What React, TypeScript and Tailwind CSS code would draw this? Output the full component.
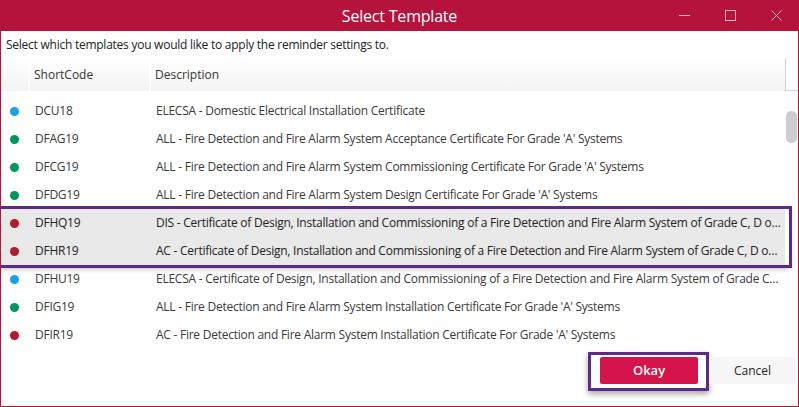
import React from "react";

const rows = [
  { code: "DCU18", desc: "ELECSA - Domestic Electrical Installation Certificate", color: "#1ba1e2" },
  { code: "DFAG19", desc: "ALL - Fire Detection and Fire Alarm System Acceptance Certificate For Grade 'A' Systems", color: "#00965e" },
  { code: "DFCG19", desc: "ALL - Fire Detection and Fire Alarm System Commissioning Certificate For Grade 'A' Systems", color: "#00965e" },
  { code: "DFDG19", desc: "ALL - Fire Detection and Fire Alarm System Design Certificate For Grade 'A' Systems", color: "#00965e" },
  { code: "DFHQ19", desc: "DIS - Certificate of Design, Installation and Commissioning of a Fire Detection and Fire Alarm System of Grade C, D or E", color: "#b01c2e", sel: true },
  { code: "DFHR19", desc: "AC - Certificate of Design, Installation and Commissioning of a Fire Detection and Fire Alarm System of Grade C, D or E", color: "#b01c2e", sel: true },
  { code: "DFHU19", desc: "ELECSA - Certificate of Design, Installation and Commissioning of a Fire Detection and Fire Alarm System of Grade C, D or E", color: "#1ba1e2" },
  { code: "DFIG19", desc: "ALL - Fire Detection and Fire Alarm System Installation Certificate For Grade 'A' Systems", color: "#00965e" },
  { code: "DFIR19", desc: "AC - Fire Detection and Fire Alarm System Installation Certificate For Grade 'A' Systems", color: "#b01c2e" },
];

function Row({ r }: { r: (typeof rows)[number] }) {
  return (
    <div className={`flex h-[28px] shrink-0 items-center ${r.sel ? "bg-[#e9e9e9] text-[#222]" : "text-[#3a3a3a]"}`}>
      <div className="flex w-[29px] shrink-0 items-center pl-[9px]">
        <span className="block h-[9px] w-[9px] rounded-full" style={{ backgroundColor: r.color }} />
      </div>
      <div className="w-[121px] shrink-0 pl-[5px]">{r.code}</div>
      <div className="min-w-0 flex-1 truncate pl-[5px] pr-[4px]">{r.desc}</div>
    </div>
  );
}

export default function App() {
  const top = rows.slice(0, 4);
  const sel = rows.slice(4, 6);
  const rest = rows.slice(6);
  return (
    <div
      className="flex h-[407px] w-[799px] flex-col overflow-hidden border-x border-b border-[#b5123c] bg-white text-[12px]"
      style={{ fontFamily: '"Segoe UI", "Open Sans", "Noto Sans", sans-serif' }}
    >
      {/* title bar */}
      <div className="relative -mx-px flex h-[31px] shrink-0 items-center justify-center bg-[#b5123c] text-[16px] text-white">
        <span className="tracking-[-0.2px]">Select Template</span>
        <div className="absolute right-0 top-0 flex h-[31px] items-center">
          <div className="flex w-[46px] justify-center">
            <svg width="11" height="11" viewBox="0 0 11 11"><line x1="0" y1="5.5" x2="11" y2="5.5" stroke="#f2bccb" strokeWidth="1" /></svg>
          </div>
          <div className="flex w-[46px] justify-center">
            <svg width="11" height="11" viewBox="0 0 11 11"><rect x="0.5" y="0.5" width="10" height="10" fill="none" stroke="#f2bccb" strokeWidth="1" /></svg>
          </div>
          <div className="flex w-[46px] justify-center">
            <svg width="11" height="11" viewBox="0 0 11 11"><path d="M0.5 0.5 L10.5 10.5 M10.5 0.5 L0.5 10.5" stroke="#f2bccb" strokeWidth="1" /></svg>
          </div>
        </div>
      </div>

      <div className="flex h-[27px] shrink-0 items-center pl-[5px] text-[#222] tracking-[-0.25px]">
        Select which templates you would like to apply the reminder settings to.
      </div>

      <div className="flex min-h-0 flex-1">
        <div className="flex min-w-0 flex-1 flex-col">
          {/* header */}
          <div className="flex h-[33px] shrink-0 bg-gradient-to-b from-white to-[#f3f3f3] text-[#333]">
            <div className="w-[29px] shrink-0 border-r-2 border-white" />
            <div className="flex w-[121px] shrink-0 items-center border-r-2 border-white pl-[4px]">ShortCode</div>
            <div className="flex flex-1 items-center pl-[4px]">Description</div>
          </div>
          <div className="mt-[6px] flex min-h-0 flex-1 flex-col tracking-[-0.25px]">
            {top.map((r) => (
              <Row key={r.code} r={r} />
            ))}
            <div className="relative z-10 -ml-px mr-[-4px] shrink-0 pr-[4px] pl-px outline-[3px] outline-solid outline-[#5e2a86] shadow-[0_3px_6px_rgba(0,0,0,0.35)]">
              {sel.map((r) => (
                <Row key={r.code} r={r} />
              ))}
            </div>
            {rest.map((r) => (
              <Row key={r.code} r={r} />
            ))}
          </div>
        </div>
        {/* scrollbar */}
        <div className="flex w-[13px] shrink-0 flex-col">
          <div className="h-[33px] border-b border-l border-[#d4d4d4]" />
          <div className="ml-[1px] mt-[20px] h-[32px] w-[11px] rounded-[5px] bg-[#cdcdcd]" />
        </div>
      </div>

      {/* footer */}
      <div className="flex h-[56px] shrink-0 items-start justify-end pr-[2px]">
        <div className="mt-[2px] border-[3px] border-[#5e2a86] pb-[4px] pl-[9px] pr-[8px] pt-[2px] shadow-[0_3px_6px_rgba(0,0,0,0.35)]">
          <button className="flex h-[27px] w-[98px] items-center justify-center rounded-[2px] bg-[#d4144a] text-[13px] font-semibold text-white">
            Okay
          </button>
        </div>
        <button className="mt-[7px] flex h-[27px] w-[87px] items-center justify-center bg-[#f7f7f7] text-[12px] text-[#222]">
          Cancel
        </button>
      </div>
    </div>
  );
}
